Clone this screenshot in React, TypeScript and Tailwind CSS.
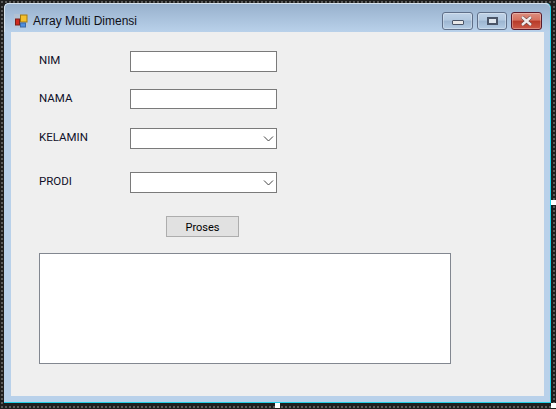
import type { ReactNode } from "react";

const Field = ({ label, select, h, mt, lb }: { label: string; select?: boolean; h: string; mt: string; lb: string }) => (
  <div className={`flex items-center ${h} ${mt}`}>
    <span className={`w-[91px] ${lb} font-['Roboto',sans-serif] text-[11.5px] leading-none text-[#101028]`}>{label}</span>
    <div className={`relative box-border ${h} w-[147px] border border-[#7a7a7a] bg-white`}>
      {select && (
        <svg className="absolute right-[2px] top-[5px]" width="11" height="9" viewBox="0 0 11 9" fill="none">
          <path d="M1 2.5 L5.5 7 L10 2.5" stroke="#444" strokeWidth="1" />
        </svg>
      )}
    </div>
  </div>
);

const Cap = ({ children, red, w }: { children: ReactNode; red?: boolean; w: string }) => (
  <div
    className={`box-border flex h-[18px] ${w} items-center justify-center rounded-[3px] border shadow-[inset_0_0_0_1px_rgba(255,255,255,0.3)] ${
      red
        ? "border-[#5a1a2a] bg-[linear-gradient(#dc8f80_0%,#d5705f_45%,#b83a28_50%,#cc5a48_100%)]"
        : "border-[#5f6f88] bg-[linear-gradient(#bfd2e7_0%,#b2c8df_45%,#9cb5d0_50%,#b5cde5_100%)]"
    }`}
  >
    {children}
  </div>
);

export default function App() {
  return (
    <div className="relative box-border h-[409px] w-[556px] overflow-hidden bg-[#1e1e1e] pl-[4px] pt-[3px] font-['Liberation_Sans',sans-serif]">
      <div className="absolute inset-[1px] border-2 border-dotted border-[#5a5a5a]" />
      <div className="relative box-border h-[400px] w-[547px] rounded-t-[5px] border-b border-r border-[#1fd0e8] bg-[#b9d1ea]">
        <div className="flex h-[29px] items-center rounded-t-[5px] border-t border-l border-[#d5e2ef] bg-[linear-gradient(#98b1cd,#b9d1ea)] pl-[9px] pr-[8px] pt-[5px]">
          <svg width="14" height="14" viewBox="0 0 14 14" className="mr-[5px]">
            <rect x="0" y="0" width="14" height="14" fill="#c0c6cc" fillOpacity="0.45" />
            <rect x="1.5" y="5" width="4" height="6" fill="#d02a20" stroke="#7a2018" />
            <rect x="6.5" y="1" width="6.5" height="7" fill="#f5c02c" stroke="#a07810" />
            <rect x="6.5" y="9" width="5" height="4" fill="#4f8ee0" stroke="#3a6aa8" />
          </svg>
          <span className="text-[12px] leading-none text-[#101018]">Array Multi Dimensi</span>
          <div className="ml-auto flex gap-[4px]">
            <Cap w="w-[31px]"><div className="mt-[3px] h-[5px] w-[12px] rounded-[1px] border border-[#4a5568] bg-[#e8e8e8]" /></Cap>
            <Cap w="w-[30px]"><div className="h-[8px] w-[11px] border-2 border-[#4a5568] bg-[#dfe6ee]" /></Cap>
            <Cap red w="w-[31px]">
              <svg width="13" height="10" viewBox="0 0 13 10">
                <path d="M2 1 L11 9 M11 1 L2 9" stroke="#5a3a3a" strokeWidth="3.6" />
                <path d="M2 1 L11 9 M11 1 L2 9" stroke="#f2eaea" strokeWidth="2.4" />
              </svg>
            </Cap>
          </div>
        </div>
        <div className="mx-[7px] box-border h-[364px] w-[533px] bg-[#efefef] pl-[28px] pt-[19px]">
          <Field label="NIM" h="h-[21px]" mt="mt-0" lb="pb-[2px]" />
          <Field label="NAMA" h="h-[20px]" mt="mt-[17px]" lb="pb-0" />
          <Field label="KELAMIN" select h="h-[21px]" mt="mt-[19px]" lb="pb-[2px]" />
          <Field label="PRODI" select h="h-[21px]" mt="mt-[23px]" lb="pb-[1px]" />
          <div className="ml-[127px] mt-[23px] box-border flex h-[21px] w-[73px] items-center justify-center border border-[#adadad] bg-[#e1e1e1] pt-[1px] font-['Roboto',sans-serif] text-[11px] leading-none text-black">
            Proses
          </div>
          <div className="mt-[16px] box-border h-[111px] w-[412px] border border-[#828790] bg-white" />
        </div>
      </div>
      <div className="absolute left-[551px] top-[200px] h-[5px] w-[5px] bg-white" />
      <div className="absolute left-[275px] top-[403px] h-[5px] w-[5px] bg-white" />
      <div className="absolute left-[551px] top-[403px] h-[5px] w-[5px] bg-white" />
    </div>
  );
}
